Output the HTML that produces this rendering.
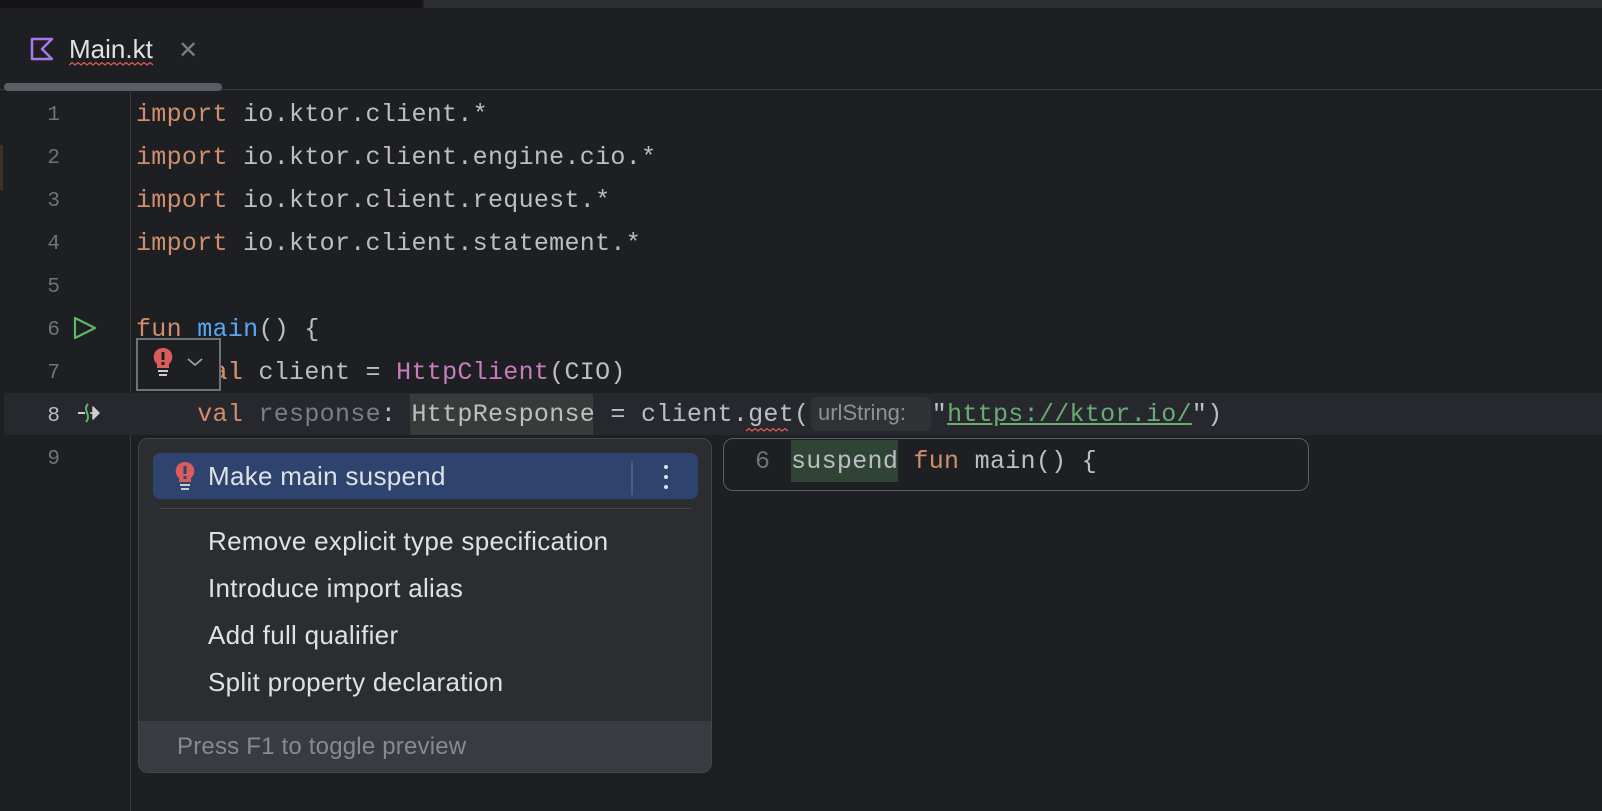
<!DOCTYPE html>
<html><head><meta charset="utf-8"><style>
*{margin:0;padding:0;box-sizing:border-box}
body{width:1602px;height:811px;background:#1e1f22;position:relative;overflow:hidden;font-family:"Liberation Sans",sans-serif}
.a{position:absolute}
.code{font-family:"Liberation Mono",monospace;font-size:25px;letter-spacing:0.3px;color:#bcbec4;white-space:pre;line-height:43px;height:43px}
.ln{font-family:"Liberation Mono",monospace;font-size:21px;color:#6f737a;width:60px;text-align:right;line-height:43px}
.k{color:#cf8e6d}.f{color:#56a8f5}.c{color:#c77dbb}.s{color:#6aab73}.g{color:#7a7e85}
.ui{font-size:26px;letter-spacing:0.3px;color:#dfe1e5;white-space:nowrap}
</style></head><body>
<div class="a" style="left:0;top:0;width:422px;height:8px;background:#141414"></div>
<div class="a" style="left:424px;top:0;width:1178px;height:8px;background:#2b2d30"></div>
<!-- tab -->
<svg class="a" style="left:30px;top:37px" width="26" height="26" viewBox="0 0 26 26"><path d="M2 2H22L12 12L22 22H2Z" fill="none" stroke="#a678e8" stroke-width="2.5" stroke-linejoin="round"/></svg>
<div class="a ui" style="left:69px;top:34px;letter-spacing:0">Main.kt</div>
<svg class="a" style="left:69px;top:62px" width="88" height="6"><path d="M0 3 l3 -2.5 l3 2.5 l3 -2.5 l3 2.5 l3 -2.5 l3 2.5 l3 -2.5 l3 2.5 l3 -2.5 l3 2.5 l3 -2.5 l3 2.5 l3 -2.5 l3 2.5 l3 -2.5 l3 2.5 l3 -2.5 l3 2.5 l3 -2.5 l3 2.5 l3 -2.5 l3 2.5 l3 -2.5 l3 2.5 l3 -2.5 l3 2.5 l3 -2.5 l3 2.5" fill="none" stroke="#e55b5b" stroke-width="1.2"/></svg>
<div class="a" style="left:178px;top:36px;font-size:24px;color:#7a7e85">✕</div>
<div class="a" style="left:0;top:89px;width:1602px;height:1px;background:#393b40"></div>
<div class="a" style="left:4px;top:83px;width:218px;height:8px;border-radius:4px;background:#5a5d63"></div>
<div class="a" style="left:130px;top:90px;width:1px;height:721px;background:#393b40"></div>
<div class="a" style="left:0;top:145px;width:3px;height:45px;background:#3d3223"></div>
<!-- line 8 highlight -->
<div class="a" style="left:4px;top:393px;width:1598px;height:42px;background:#26282e"></div>
<!-- line numbers -->
<div class="a ln" style="left:0;top:94px">1<br>2<br>3<br>4<br>5<br>6<br>7<br><span style="color:#bcbec4">8</span><br>9</div>
<svg class="a" style="left:72px;top:315px" width="26" height="26"><path d="M3 3L23 13L3 23Z" fill="none" stroke="#5fb865" stroke-width="2.2" stroke-linejoin="round"/></svg>
<svg class="a" style="left:76px;top:400px" width="26" height="26"><path d="M2 13H9" stroke="#ccc" stroke-width="2"/><path d="M12 4C6 10 16 15 10 22" fill="none" stroke="#5fb865" stroke-width="2"/><path d="M14 13H20M17 7L23 13L17 19Z" fill="#ccc" stroke="#ccc" stroke-width="1.5" stroke-linejoin="round"/></svg>
<!-- code -->
<div class="a code" style="left:136px;top:93px"><span class="k">import</span> io.ktor.client.*</div>
<div class="a code" style="left:136px;top:136px"><span class="k">import</span> io.ktor.client.engine.cio.*</div>
<div class="a code" style="left:136px;top:179px"><span class="k">import</span> io.ktor.client.request.*</div>
<div class="a code" style="left:136px;top:222px"><span class="k">import</span> io.ktor.client.statement.*</div>
<div class="a code" style="left:136px;top:308px"><span class="k">fun</span> <span class="f">main</span>() {</div>
<div class="a code" style="left:136px;top:351px">    <span class="k">val</span> client = <span class="c">HttpClient</span>(CIO)</div>
<div class="a" style="left:410px;top:394px;width:183px;height:41px;background:#373b39"></div>
<div class="a" style="left:811px;top:397px;width:120px;height:34px;border-radius:6px;background:#303236"></div>
<div class="a code" style="left:136px;top:393px">    <span class="k">val</span> <span class="g">response</span>: HttpResponse = client.get(        "<span class="s" style="text-decoration:underline">https://ktor.io/</span>")</div>
<div class="a" style="left:818px;top:400px;font-size:22px;color:#8c9097">urlString:</div>
<svg class="a" style="left:746px;top:428px" width="46" height="6"><path d="M0 3 l3 -2.5 l3 2.5 l3 -2.5 l3 2.5 l3 -2.5 l3 2.5 l3 -2.5 l3 2.5 l3 -2.5 l3 2.5 l3 -2.5 l3 2.5 l3 -2.5 l3 2.5" fill="none" stroke="#e55b5b" stroke-width="1.2"/></svg>
<!-- bulb box -->
<div class="a" style="left:136px;top:338px;width:85px;height:53px;border:2px solid #6f7276;background:#1e1f22"></div>
<div class="a code" style="left:197px;top:351px;clip-path:inset(0 0 0 24px)"><span class="k">val</span></div>
<svg class="a" style="left:150px;top:345px" width="26" height="36" viewBox="0 0 26 36"><path d="M13 3a9 9 0 0 0-6 16v4h12v-4a9 9 0 0 0-6-16z" fill="#db5c5c"/><rect x="11.5" y="7" width="3" height="8" fill="#1e1f22"/><rect x="11.5" y="17" width="3" height="3" fill="#1e1f22"/><rect x="8" y="25" width="10" height="2" fill="#ccc"/><rect x="9" y="29" width="8" height="2" fill="#ccc"/></svg>
<svg class="a" style="left:186px;top:356px" width="18" height="12"><path d="M2 3L9 9L16 3" fill="none" stroke="#9da0a8" stroke-width="1.8"/></svg>
<!-- popup -->
<div class="a" style="left:138px;top:438px;width:574px;height:335px;border:1px solid #43454a;border-radius:10px;background:#2b2d30;overflow:hidden">
  <div class="a" style="left:14px;top:14px;width:545px;height:46px;border-radius:7px;background:#2e436e"></div>
  <div class="a" style="left:492px;top:22px;width:2px;height:34px;background:#4b5c87"></div>
  <div class="a" style="left:525px;top:26px;width:4px;height:4px;border-radius:2px;background:#dfe1e5;box-shadow:0 10px 0 #dfe1e5,0 20px 0 #dfe1e5"></div>
  <svg class="a" style="left:33px;top:20px" width="26" height="36" viewBox="0 0 26 36"><path d="M13 3a9 9 0 0 0-6 16v4h12v-4a9 9 0 0 0-6-16z" fill="#db5c5c"/><rect x="11.5" y="7" width="3" height="8" fill="#2e436e"/><rect x="11.5" y="17" width="3" height="3" fill="#2e436e"/><rect x="8" y="25" width="10" height="2" fill="#ccc"/><rect x="9" y="29" width="8" height="2" fill="#ccc"/></svg>
  <div class="a ui" style="left:69px;top:22px">Make main suspend</div>
  <div class="a" style="left:21px;top:69px;width:531px;height:1px;background:#43454a"></div>
  <div class="a ui" style="left:69px;top:87px">Remove explicit type specification</div>
  <div class="a ui" style="left:69px;top:134px">Introduce import alias</div>
  <div class="a ui" style="left:69px;top:181px">Add full qualifier</div>
  <div class="a ui" style="left:69px;top:228px">Split property declaration</div>
  <div class="a" style="left:0;top:282px;width:574px;height:53px;background:#393b40"></div>
  <div class="a ui" style="left:38px;top:294px;font-size:24px;letter-spacing:0.2px;color:#868a91">Press F1 to toggle preview</div>
</div>
<!-- preview -->
<div class="a" style="left:723px;top:438px;width:586px;height:53px;border:1px solid #5a5d63;border-radius:10px;background:#1e1f22;overflow:hidden">
  <div class="a" style="left:67px;top:1px;width:107px;height:42px;background:#2f4435"></div>
  <div class="a code" style="left:31px;top:1px;color:#6f737a">6</div>
  <div class="a code" style="left:67px;top:1px">suspend <span class="k">fun</span> main() {</div>
</div>
</body></html>
